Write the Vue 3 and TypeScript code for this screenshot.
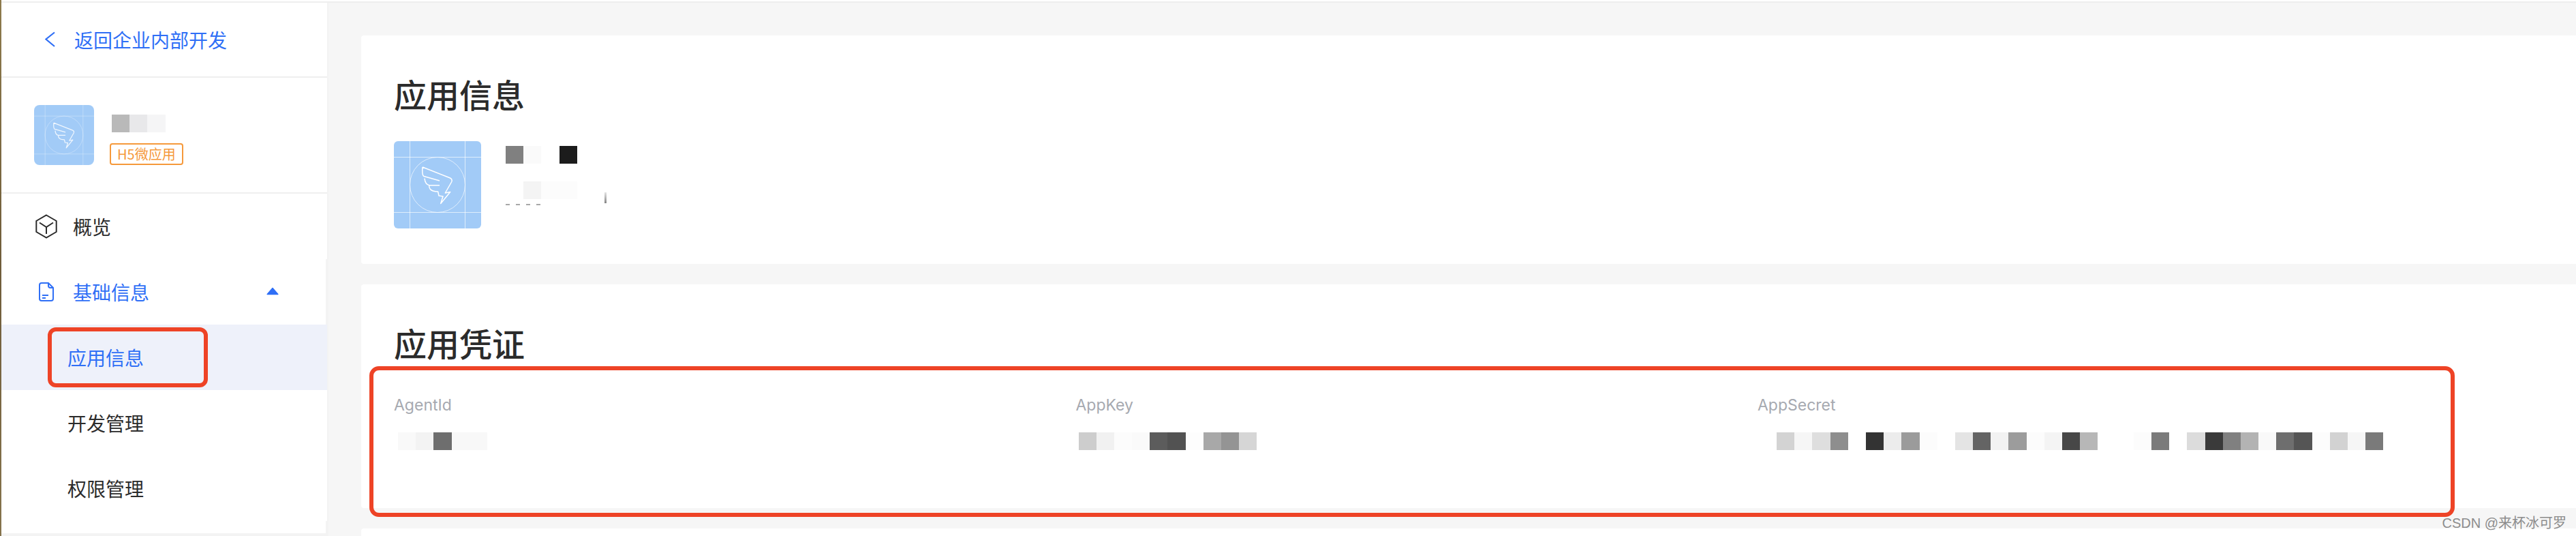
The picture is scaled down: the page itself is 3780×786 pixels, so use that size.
<script setup lang="ts">
type Credential = {
  label: string
  offset: number
  cells: string[]
}

const nameCells = ['#808080', '#fafafa', '#ffffff', '#1c1c1c']
const descCells = ['#ffffff', '#f4f4f4', '#fcfcfc', '#fcfcfc']
const sideNameCells = ['#b9b9b9', '#e8e8ea', '#f5f5f6']

const credentials: Credential[] = [
  {
    label: 'AgentId',
    offset: 6,
    cells: ['#f9f9f9', '#f3f3f3', '#6e6e6e', '#f8f8f8', '#f8f8f8'],
  },
  {
    label: 'AppKey',
    offset: 4,
    cells: ['#cdcdcd', '#f1f1f1', '#fcfcfc', '#fafafa', '#5c5c5c', '#525252', '#fdfdfd', '#a8a8a8', '#949494', '#d6d6d6'],
  },
  {
    label: 'AppSecret',
    offset: 28,
    cells: [
      '#d3d3d3', '#f6f6f6', '#dedede', '#8e8e8e', '#ffffff', '#333333', '#ececec', '#9b9b9b', '#fcfcfc', '#ffffff',
      '#e4e4e4', '#646464', '#f2f2f2', '#9c9c9c', '#fcfcfc', '#f4f4f4', '#474747', '#b7b7b7', '#ffffff', '#ffffff',
      '#fcfcfc', '#7b7b7b', '#ffffff', '#dcdcdc', '#3a3a3a', '#808080', '#b3b3b3', '#f9f9f9', '#6e6e6e', '#555555',
      '#fcfcfc', '#d2d2d2', '#f6f6f6', '#7a7a7a',
    ],
  },
]
</script>

<template>
  <div class="page">
    <div class="edge"></div>
    <div class="shell">
      <div class="topline"></div>
      <div class="body">
        <aside class="side">
          <div class="side-top">
            <a class="back">
              <svg class="back-icon" width="16" height="24" viewBox="0 0 16 24">
                <path d="M14 1.5 1.5 11.5 14 22" fill="none" stroke="currentColor" stroke-width="2.2" />
              </svg>
              <span>返回企业内部开发</span>
            </a>
            <div class="app-block">
              <svg class="logo logo-small" viewBox="0 0 128 128">
                <path class="grid" d="M23.5 0V128M104.5 0V128M0 23.5H128M0 104.5H128" />
                <circle class="grid" cx="64" cy="64" r="40.5" />
                <path class="wing" d="M42 38 82.5 54Q86.5 56 84.5 60L75.3 76 82.7 74.5 68.7 91.5 72 81 66 80 64.7 74Q56 74 53 70 51 66 52 64.7H67M52 64.7Q46 64 45 54.7M67 58 44 51.5Q41 50 42 38" />
              </svg>
              <div class="app-meta">
                <div class="mosaic side-name">
                  <i v-for="(c, i) in sideNameCells" :key="i" :style="{ background: c }"></i>
                </div>
                <span class="tag">H5微应用</span>
              </div>
            </div>
            <div class="menu-row">
              <svg class="menu-icon" width="32" height="36" viewBox="0 0 32 36">
                <path d="M16 1.5 30.7 10V26L16 34.5 1.3 26V10ZM6 12.5 16 19 26 12.5M16 19V29" fill="none" stroke="#2b2b2b" stroke-width="2" />
              </svg>
              <span>概览</span>
            </div>
          </div>

          <div class="side-lower">
            <div class="menu-row is-open">
              <svg class="menu-icon" width="32" height="30" viewBox="0 0 32 30">
                <path d="M9 2H19L26 9V25A3 3 0 0 1 23 28H9A3 3 0 0 1 6 25V5A3 3 0 0 1 9 2ZM19 2V6A3 3 0 0 0 22 9H26M10 20H19M10 24H15" fill="none" stroke="currentColor" stroke-width="2" />
              </svg>
              <span>基础信息</span>
              <svg class="caret" width="18" height="12" viewBox="0 0 18 12">
                <path d="M9 1.5 16.8 10.5H1.2Z" fill="currentColor" stroke="currentColor" stroke-width="1.5" stroke-linejoin="round" />
              </svg>
            </div>
            <div class="sub-row is-active">
              <span>应用信息</span>
              <div class="mark mark-side"></div>
            </div>
            <div class="sub-row">开发管理</div>
            <div class="sub-row">权限管理</div>
          </div>
        </aside>

        <main class="main">
          <section class="card card-info">
            <h2>应用信息</h2>
            <div class="info-row">
              <svg class="logo logo-large" viewBox="0 0 128 128">
                <path class="grid" d="M23.5 0V128M104.5 0V128M0 23.5H128M0 104.5H128" />
                <circle class="grid" cx="64" cy="64" r="40.5" />
                <path class="wing" d="M42 38 82.5 54Q86.5 56 84.5 60L75.3 76 82.7 74.5 68.7 91.5 72 81 66 80 64.7 74Q56 74 53 70 51 66 52 64.7H67M52 64.7Q46 64 45 54.7M67 58 44 51.5Q41 50 42 38" />
              </svg>
              <div class="info-text">
                <div class="mosaic">
                  <i v-for="(c, i) in nameCells" :key="i" :style="{ background: c }"></i>
                </div>
                <div class="mosaic desc">
                  <i v-for="(c, i) in descCells" :key="i" :style="{ background: c }"></i>
                </div>
                <div class="scrap-line"></div>
                <div class="scrap-tail"></div>
              </div>
            </div>
          </section>

          <section class="card card-cred">
            <h2>应用凭证</h2>
            <div class="cred-grid">
              <div v-for="item in credentials" :key="item.label" class="cred">
                <div class="cred-label">{{ item.label }}</div>
                <div class="mosaic cred-value" :style="{ paddingLeft: item.offset + 'px' }">
                  <i v-for="(c, i) in item.cells" :key="i" :style="{ background: c }"></i>
                </div>
              </div>
            </div>
            <div class="mark mark-main"></div>
          </section>

          <section class="card card-next"></section>
        </main>
      </div>
    </div>
    <div class="watermark">CSDN @来杯冰可罗</div>
  </div>
</template>

<style>
html,
body {
  margin: 0;
  background: #fff;
}
</style>

<style scoped>
.page {
  position: relative;
  display: flex;
  width: 3780px;
  height: 786px;
  overflow: hidden;
  font-family: "Noto Sans CJK SC", "Inter", sans-serif;
  color: #2b2b2b;
}

.edge {
  flex: 0 0 2px;
  background: linear-gradient(180deg, #8d7a4c, #6f5c3a 50%, #85734c);
}

.shell {
  flex: 1;
  min-width: 0;
  display: flex;
  flex-direction: column;
  background: #fff;
}

.topline {
  flex: 0 0 2px;
  margin-top: 2px;
  background: #eeeeee;
}

.body {
  flex: 1;
  min-height: 0;
  display: flex;
}

.side {
  flex: 0 0 480px;
  background: #f3f3f3;
}

.side-top {
  width: 478px;
  background: #fff;
}

.side-lower {
  width: 476px;
  height: 402px;
  background: #fff;
}

.back {
  display: flex;
  align-items: center;
  height: 108px;
  padding-left: 64px;
  border-bottom: 2px solid #efefef;
  font-size: 28px;
  color: #2f6ff6;
}

.back-icon {
  margin-right: 27px;
}

.app-block {
  display: flex;
  align-items: center;
  height: 168px;
  padding-left: 48px;
  border-bottom: 2px solid #efefef;
}

.logo {
  display: block;
  background: #a2cbf7;
}

.logo-small {
  width: 88px;
  height: 88px;
  border-radius: 8px;
}

.logo-large {
  width: 128px;
  height: 128px;
  border-radius: 6px;
}

.grid {
  fill: none;
  stroke: #fff;
  stroke-width: 1;
  opacity: 0.65;
}

.logo-small .grid {
  stroke-width: 1.1;
  opacity: 0.4;
}

.wing {
  fill: none;
  stroke: #fff;
  stroke-width: 1.5;
  stroke-linejoin: round;
}

.logo-small .wing {
  stroke-width: 1.8;
  opacity: 0.85;
}

.app-meta {
  display: flex;
  flex-direction: column;
  align-items: flex-start;
  margin-left: 23px;
}

.mosaic {
  display: flex;
  height: 26px;
}

.mosaic i {
  flex: 0 0 26.2px;
  height: 26px;
}

.side-name {
  padding-left: 3px;
  margin-top: 14px;
}

.tag {
  box-sizing: border-box;
  height: 32px;
  margin-top: 16px;
  padding: 0 9px;
  border: 2px solid #f5993b;
  border-radius: 4px;
  font-size: 20px;
  line-height: 28px;
  color: #f5993b;
}

.menu-row {
  display: flex;
  align-items: center;
  height: 96px;
  padding-left: 50px;
  font-size: 28px;
}

.menu-icon {
  margin-right: 23px;
  flex: none;
}

.is-open {
  color: #2f6ff6;
}

.caret {
  margin-left: 172px;
  margin-top: -2px;
}

.sub-row {
  position: relative;
  display: flex;
  align-items: center;
  width: 478px;
  height: 96px;
  padding-left: 97px;
  box-sizing: border-box;
  background: #fff;
  font-size: 28px;
}

.is-active {
  background: #eef1fa;
  color: #2f6ff6;
}

.mark {
  position: absolute;
  box-sizing: border-box;
  border: 6px solid #ee4326;
  z-index: 2;
}

.mark-side {
  left: 68px;
  top: 4px;
  width: 235px;
  height: 88px;
  border-radius: 12px;
}

.main {
  flex: 1;
  min-width: 0;
  padding: 48px 0 0 48px;
  background: #f6f6f6;
}

.card {
  position: relative;
  box-sizing: border-box;
  padding: 55px 0 0 48px;
  background: #fff;
  border-radius: 4px 0 0 4px;
}

.card h2 {
  margin: 0;
  font-size: 48px;
  line-height: 60px;
  font-weight: 500;
}

.card-info {
  height: 335px;
}

.info-row {
  display: flex;
  margin-top: 40px;
}

.info-text {
  position: relative;
  flex: 1;
  margin-left: 36px;
  padding-top: 7px;
}

.desc {
  margin-top: 26px;
}

.scrap-line {
  width: 60px;
  height: 2px;
  margin-top: 7px;
  background: repeating-linear-gradient(90deg, #a8a8a8 0 6px, transparent 6px 15px);
}

.scrap-tail {
  position: absolute;
  left: 145px;
  top: 75px;
  width: 3px;
  height: 16px;
  background: linear-gradient(180deg, #e4e4e4, #858585);
}

.card-cred {
  height: 328px;
  margin-top: 30px;
}

.cred-grid {
  display: grid;
  grid-template-columns: repeat(3, 1000.5px);
  margin-top: 46px;
}

.cred-label {
  font-family: "Inter", "Noto Sans CJK SC", sans-serif;
  font-size: 23px;
  line-height: 32px;
  color: #a6a9b0;
}

.cred-value {
  margin-top: 24px;
}

.mark-main {
  left: 12px;
  top: 120px;
  width: 3060px;
  height: 221px;
  border-radius: 14px;
}

.card-next {
  height: 60px;
  margin-top: 30px;
}

.watermark {
  position: absolute;
  right: 14px;
  top: 754px;
  font-family: "Liberation Sans", "Noto Sans CJK SC", sans-serif;
  font-size: 20px;
  line-height: 26px;
  color: #8c8c8c;
  z-index: 3;
}
</style>
